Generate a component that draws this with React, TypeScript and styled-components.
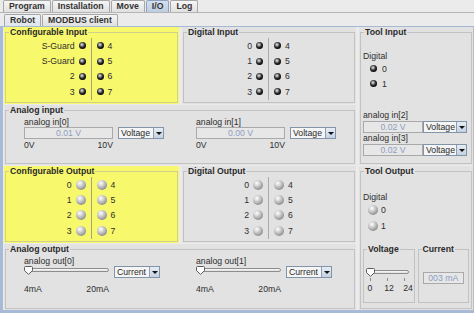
import React from 'react';
import styled, { createGlobalStyle } from 'styled-components';

const GlobalStyle = createGlobalStyle`
  html, body { margin: 0; padding: 0; background: #ebebeb; }
  body {
    font-family: 'Liberation Sans', Arial, sans-serif;
    font-size: 8.7px;
    color: #2e2e2e;
  }
  * { box-sizing: border-box; }
`;

const inputRows: [string, string][] = [
  ['S-Guard', '4'],
  ['S-Guard', '5'],
  ['2', '6'],
  ['3', '7'],
];

const numberRows: [string, string][] = [
  ['0', '4'],
  ['1', '5'],
  ['2', '6'],
  ['3', '7'],
];

function IoPanel({
  title,
  rows,
  area,
  yellow,
  out,
}: {
  title: string;
  rows: [string, string][];
  area: string;
  yellow?: boolean;
  out?: boolean;
}) {
  return (
    <Cell $area={area} $yellow={yellow}>
      <Group $yellow={yellow}>
        <Legend>{title}</Legend>
        <IoGrid>
          {rows.map(([left, right]) => (
            <React.Fragment key={left + right}>
              <IoCell $yellow={yellow}>
                {left}
                <Led $out={out} />
              </IoCell>
              <IoCell $right>
                <Led $out={out} />
                {right}
              </IoCell>
            </React.Fragment>
          ))}
        </IoGrid>
      </Group>
    </Cell>
  );
}

function Slider({ width }: { width: number }) {
  return (
    <SliderBox $w={width}>
      <SliderTrack />
      <Thumb width="9" height="9" viewBox="0 0 9 9">
        <path
          d="M1.5 0.5 H7.5 Q8.5 0.5 8.5 1.5 V4.6 L4.5 8.4 L0.5 4.6 V1.5 Q0.5 0.5 1.5 0.5 Z"
          fill="#fdfdfd"
          stroke="#5c5c5c"
        />
      </Thumb>
    </SliderBox>
  );
}

function Combo({ label, width }: { label: string; width: number }) {
  return (
    <ComboBox $w={width}>
      <ComboText>{label}</ComboText>
      <ComboArrow>
        <Caret />
      </ComboArrow>
    </ComboBox>
  );
}

function AnalogIn({ name, value }: { name: string; value: string }) {
  return (
    <Channel>
      <ChannelLabel>{name}</ChannelLabel>
      <ControlRow>
        <Field $w={89}>{value}</Field>
        <Combo label="Voltage" width={46} />
      </ControlRow>
      <Scale $w={89} $top={2}>
        <span>0V</span>
        <span>10V</span>
      </Scale>
    </Channel>
  );
}

function AnalogOut({ name }: { name: string }) {
  return (
    <Channel>
      <ChannelLabel>{name}</ChannelLabel>
      <ControlRow $start>
        <Slider width={85} />
        <Combo label="Current" width={46} />
      </ControlRow>
      <Scale $w={85} $top={7}>
        <span>4mA</span>
        <span>20mA</span>
      </Scale>
    </Channel>
  );
}

function ToolAnalog({ name }: { name: string }) {
  return (
    <>
      <ChannelLabel>{name}</ChannelLabel>
      <ControlRow $tight>
        <Field $w={60}>0.02 V</Field>
        <Combo label="Voltage" width={44} />
      </ControlRow>
    </>
  );
}

export default function App() {
  return (
    <Screen>
      <GlobalStyle />
      <TabRow>
        <Tab>Program</Tab>
        <Tab>Installation</Tab>
        <Tab>Move</Tab>
        <Tab $active>I/O</Tab>
        <Tab>Log</Tab>
      </TabRow>
      <TabRow $sub>
        <Tab $soft>Robot</Tab>
        <Tab>MODBUS client</Tab>
      </TabRow>

      <Content>
        <IoPanel title="Configurable Input" rows={inputRows} area="1 / 1 / 2 / 2" yellow />
        <IoPanel title="Digital Input" rows={numberRows} area="1 / 2 / 2 / 3" />

        <Cell $area="1 / 3 / 3 / 4">
          <Group>
            <Legend>Tool Input</Legend>
            <ToolText $top={15}>Digital</ToolText>
            <ToolLedRow>
              <Led />0
            </ToolLedRow>
            <ToolLedRow>
              <Led />1
            </ToolLedRow>
            <ToolAnalogBlock>
              <ToolAnalog name="analog in[2]" />
              <ToolAnalog name="analog in[3]" />
            </ToolAnalogBlock>
          </Group>
        </Cell>

        <Cell $area="2 / 1 / 3 / 3">
          <Group>
            <Legend>Analog input</Legend>
            <Halves>
              <AnalogIn name="analog in[0]" value="0.01 V" />
              <AnalogIn name="analog in[1]" value="0.00 V" />
            </Halves>
          </Group>
        </Cell>

        <IoPanel title="Configurable Output" rows={numberRows} area="3 / 1 / 4 / 2" yellow out />
        <IoPanel title="Digital Output" rows={numberRows} area="3 / 2 / 4 / 3" out />

        <Cell $area="3 / 3 / 5 / 4">
          <Group>
            <Legend>Tool Output</Legend>
            <ToolText $top={17}>Digital</ToolText>
            <ToolLedRow $tall>
              <Led $out />0
            </ToolLedRow>
            <ToolLedRow $tall>
              <Led $out />1
            </ToolLedRow>
            <SubBoxes>
              <SubGroup>
                <Legend>Voltage</Legend>
                <VoltageBody>
                  <Slider width={43} />
                  <Ticks>
                    <Tick />
                    <Tick />
                    <Tick />
                  </Ticks>
                  <TickLabels>
                    <span>0</span>
                    <span>12</span>
                    <span>24</span>
                  </TickLabels>
                </VoltageBody>
              </SubGroup>
              <SubGroup>
                <Legend>Current</Legend>
                <CurrentBody>
                  <Field $w={41}>003 mA</Field>
                </CurrentBody>
              </SubGroup>
            </SubBoxes>
          </Group>
        </Cell>

        <Cell $area="4 / 1 / 5 / 3">
          <Group>
            <Legend>Analog output</Legend>
            <Halves>
              <AnalogOut name="analog out[0]" />
              <AnalogOut name="analog out[1]" />
            </Halves>
          </Group>
        </Cell>
      </Content>
    </Screen>
  );
}

const Screen = styled.div`
  width: 474px;
  height: 313px;
  display: flex;
  flex-direction: column;
  background: #ebebeb;
  overflow: hidden;
`;

const TabRow = styled.div<{ $sub?: boolean }>`
  flex: none;
  display: flex;
  align-items: flex-end;
  height: ${(p) => (p.$sub ? 14 : 13)}px;
  padding-left: ${(p) => (p.$sub ? 4 : 3)}px;
  border-bottom: 1px solid ${(p) => (p.$sub ? '#a6b8d4' : '#b4b4b4')};
`;

const Tab = styled.div<{ $active?: boolean; $soft?: boolean }>`
  height: 12px;
  padding: 0 5px;
  margin-right: 1px;
  border: 1px solid ${(p) => (p.$active ? '#8ea2bf' : '#a6a6a6')};
  border-bottom: none;
  border-radius: 2px 2px 0 0;
  background: ${(p) =>
    p.$active
      ? 'linear-gradient(#d4e0ee, #bccde2)'
      : p.$soft
      ? 'linear-gradient(#eef1f5, #dfe5ec)'
      : 'linear-gradient(#f6f6f6, #e0e0e0)'};
  font-weight: bold;
  line-height: 11px;
  white-space: nowrap;
  color: #333;
`;

const Content = styled.div`
  flex: 1;
  display: grid;
  grid-template-columns: 175px 174px 114px;
  grid-template-rows: 77px 60px 77px 66px;
  column-gap: 3px;
  row-gap: 1px;
  padding-left: 1px;
  border-left: 3px solid #a7bad7;
  border-bottom: 3px solid #a7bad7;
  border-right: 1px solid #bcbcbc;
`;

const Cell = styled.div<{ $area: string; $yellow?: boolean }>`
  grid-area: ${(p) => p.$area};
  display: flex;
  padding: 0 1px 1px;
  background: ${(p) => (p.$yellow ? '#f8f86c' : '#e2e2e2')};
`;

const Group = styled.fieldset<{ $yellow?: boolean }>`
  flex: 1;
  min-width: 0;
  margin: 0;
  padding: 0 2px 2px;
  border: 1px solid ${(p) => (p.$yellow ? '#d0d08c' : '#c2c2c2')};
  display: flex;
  flex-direction: column;
`;

const Legend = styled.legend`
  padding: 0 1px;
  margin-left: 1px;
  font-weight: bold;
  line-height: 10px;
  color: #2a2a2a;
`;

const IoGrid = styled.div`
  display: grid;
  grid-template-columns: 1fr 1fr;
  grid-auto-rows: 15.4px;
  margin-top: 1px;
`;

const IoCell = styled.div<{ $right?: boolean; $yellow?: boolean }>`
  display: flex;
  align-items: center;
  gap: 4px;
  justify-content: ${(p) => (p.$right ? 'flex-start' : 'flex-end')};
  padding: ${(p) => (p.$right ? '0 0 0 5px' : '0 5px 0 0')};
  border-right: ${(p) =>
    p.$right ? 'none' : `1px solid ${p.$yellow ? '#a6a66e' : '#ababab'}`};
`;

const Led = styled.span<{ $out?: boolean }>`
  flex: none;
  width: ${(p) => (p.$out ? 10 : 7)}px;
  height: ${(p) => (p.$out ? 10 : 7)}px;
  border-radius: 50%;
  background: ${(p) =>
    p.$out
      ? 'radial-gradient(circle at 38% 32%, #ffffff 0, #d6d6d6 28%, #9c9c9c 66%, #666 100%)'
      : 'radial-gradient(circle at 42% 38%, #f2f2f2 0, #9a9a9a 20%, #2a2a2a 46%, #050505 72%, #555 100%)'};
`;

const Halves = styled.div`
  flex: 1;
  display: grid;
  grid-template-columns: 1fr 1fr;
`;

const Channel = styled.div`
  display: flex;
  flex-direction: column;
  align-items: flex-start;
  padding: 3px 0 0 16px;
`;

const ChannelLabel = styled.div`
  line-height: 9px;
  white-space: nowrap;
`;

const ControlRow = styled.div<{ $start?: boolean; $tight?: boolean }>`
  display: flex;
  align-items: ${(p) => (p.$start ? 'flex-start' : 'center')};
  gap: ${(p) => (p.$tight ? 0 : 5)}px;
`;

const Field = styled.div<{ $w: number }>`
  flex: none;
  width: ${(p) => p.$w}px;
  height: 12px;
  border: 1px solid #a9a9a9;
  background: #e7e7e7;
  color: #8c9dc1;
  text-align: center;
  line-height: 10px;
`;

const ComboBox = styled.div<{ $w: number }>`
  flex: none;
  display: flex;
  width: ${(p) => p.$w}px;
  height: 12px;
  border: 1px solid #8494a8;
  background: #f5f5f5;
`;

const ComboText = styled.span`
  flex: 1;
  padding-left: 2px;
  line-height: 10px;
  color: #2a2a2a;
  overflow: hidden;
`;

const ComboArrow = styled.span`
  flex: none;
  width: 10px;
  display: flex;
  align-items: center;
  justify-content: center;
  border-left: 1px solid #8e9db2;
  background: linear-gradient(#e6edf5, #c4d1e2);
`;

const Caret = styled.span`
  width: 0;
  height: 0;
  border-left: 3px solid transparent;
  border-right: 3px solid transparent;
  border-top: 3px solid #111;
`;

const Scale = styled.div<{ $w: number; $top: number }>`
  width: ${(p) => p.$w}px;
  margin-top: ${(p) => p.$top}px;
  display: flex;
  justify-content: space-between;
  line-height: 9px;
`;

const SliderBox = styled.div<{ $w: number }>`
  position: relative;
  flex: none;
  width: ${(p) => p.$w}px;
  height: 9px;
`;

const SliderTrack = styled.div`
  margin: 2px 0 0 5px;
  height: 4px;
  border: 1px solid #8d8d8d;
  border-radius: 2px;
  background: linear-gradient(#fafafa, #dedede);
`;

const Thumb = styled.svg`
  position: absolute;
  left: 0;
  top: 0;
`;

const ToolText = styled.div<{ $top?: number }>`
  margin-top: ${(p) => p.$top ?? 12}px;
  line-height: 9px;
`;

const ToolLedRow = styled.div<{ $tall?: boolean }>`
  display: flex;
  align-items: center;
  gap: ${(p) => (p.$tall ? 3 : 5)}px;
  height: ${(p) => (p.$tall ? 16 : 15)}px;
  padding-left: ${(p) => (p.$tall ? 5 : 7)}px;
`;

const ToolAnalogBlock = styled.div`
  margin-top: auto;
  padding-bottom: 5px;
  display: flex;
  flex-direction: column;
  gap: 1px;
`;

const SubBoxes = styled.div`
  margin-top: 10px;
  flex: 1;
  display: flex;
  gap: 3px;
  padding-bottom: 3px;
`;

const SubGroup = styled.fieldset`
  flex: 1;
  min-width: 0;
  margin: 0;
  padding: 0 2px 2px;
  border: 1px solid #c2c2c2;
  display: flex;
  flex-direction: column;
`;

const VoltageBody = styled.div`
  margin-top: 14px;
  display: flex;
  flex-direction: column;
`;

const Ticks = styled.div`
  width: 43px;
  display: flex;
  justify-content: space-between;
  padding: 0 4px;
  margin-top: 1px;
`;

const Tick = styled.span`
  width: 1px;
  height: 3px;
  background: #8a8a8a;
`;

const TickLabels = styled.div`
  width: 50px;
  margin: 3px 0 0 -2px;
  display: flex;
  justify-content: space-between;
  line-height: 9px;

  span {
    width: 12px;
    text-align: center;
  }
`;

const CurrentBody = styled.div`
  flex: 1;
  display: flex;
  justify-content: center;
  padding-top: 18px;
`;
